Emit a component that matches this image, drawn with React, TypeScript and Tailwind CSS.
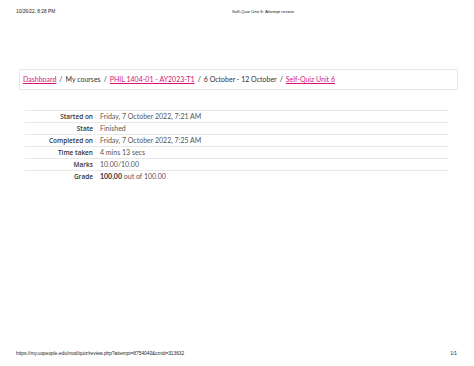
import React from "react";

const rows: { label: string; value: React.ReactNode }[] = [
  { label: "Started on", value: "Friday, 7 October 2022, 7:21 AM" },
  { label: "State", value: "Finished" },
  { label: "Completed on", value: "Friday, 7 October 2022, 7:25 AM" },
  { label: "Time taken", value: "4 mins 13 secs" },
  { label: "Marks", value: "10.00/10.00" },
  {
    label: "Grade",
    value: (
      <>
        <span className="font-bold text-[#333]">100.00</span> out of 100.00
      </>
    ),
  },
];

export default function App() {
  return (
    <div className="w-[474px] h-[366px] bg-white flex flex-col overflow-hidden">
      <div
        className="flex items-center h-[24px] pl-[16px] text-[#222]"
        style={{ fontFamily: '"Liberation Sans", Arial, sans-serif' }}
      >
        <span className="w-[216px] shrink-0 text-[4.8px]">10/26/22, 8:28 PM</span>
        <span className="shrink-0 text-[4.4px]">Self-Quiz Unit 6: Attempt review</span>
      </div>

      <div
        className="flex flex-col pl-[19px] pr-[16px] mt-[45px] text-[7px]"
        style={{ fontFamily: 'Lato, "Open Sans", sans-serif' }}
      >
        <div className="h-[21px] border border-[#e6e6e6] rounded-[1px] flex items-center pl-[3px] text-[#333] whitespace-nowrap">
          <a className="text-[#d4157a] underline">Dashboard</a>
          <span className="mx-[3px]">/</span>
          <span>My courses</span>
          <span className="mx-[3px]">/</span>
          <a className="text-[#d4157a] underline">PHIL 1404-01 - AY2023-T1</a>
          <span className="mx-[3px]">/</span>
          <span>6 October - 12 October</span>
          <span className="mx-[3px]">/</span>
          <a className="text-[#d4157a] underline">Self-Quiz Unit 6</a>
        </div>
      </div>

      <div
        className="mt-[20px] ml-[25px] w-[423px] flex flex-col text-[7px]"
        style={{ fontFamily: 'Lato, "Open Sans", sans-serif' }}
      >
        {rows.map((r) => (
          <div
            key={r.label}
            className="flex items-center h-[12px] border-t border-[#e8e8e8]"
          >
            <div
              className="w-[68px] text-right font-semibold text-[6.5px] text-[#333]"
              style={{ fontFamily: '"Open Sans", Lato, sans-serif' }}
            >
              {r.label}
            </div>
            <div className="pl-[7px] text-[#555]">{r.value}</div>
          </div>
        ))}
      </div>

      <div
        className="mt-auto flex items-center justify-between h-[24px] pl-[16px] pr-[17px] text-[4.8px] text-[#222]"
        style={{ fontFamily: '"Liberation Sans", Arial, sans-serif' }}
      >
        <span>https://my.uopeople.edu/mod/quiz/review.php?attempt=8754040&amp;cmid=313632</span>
        <span>1/1</span>
      </div>
    </div>
  );
}
